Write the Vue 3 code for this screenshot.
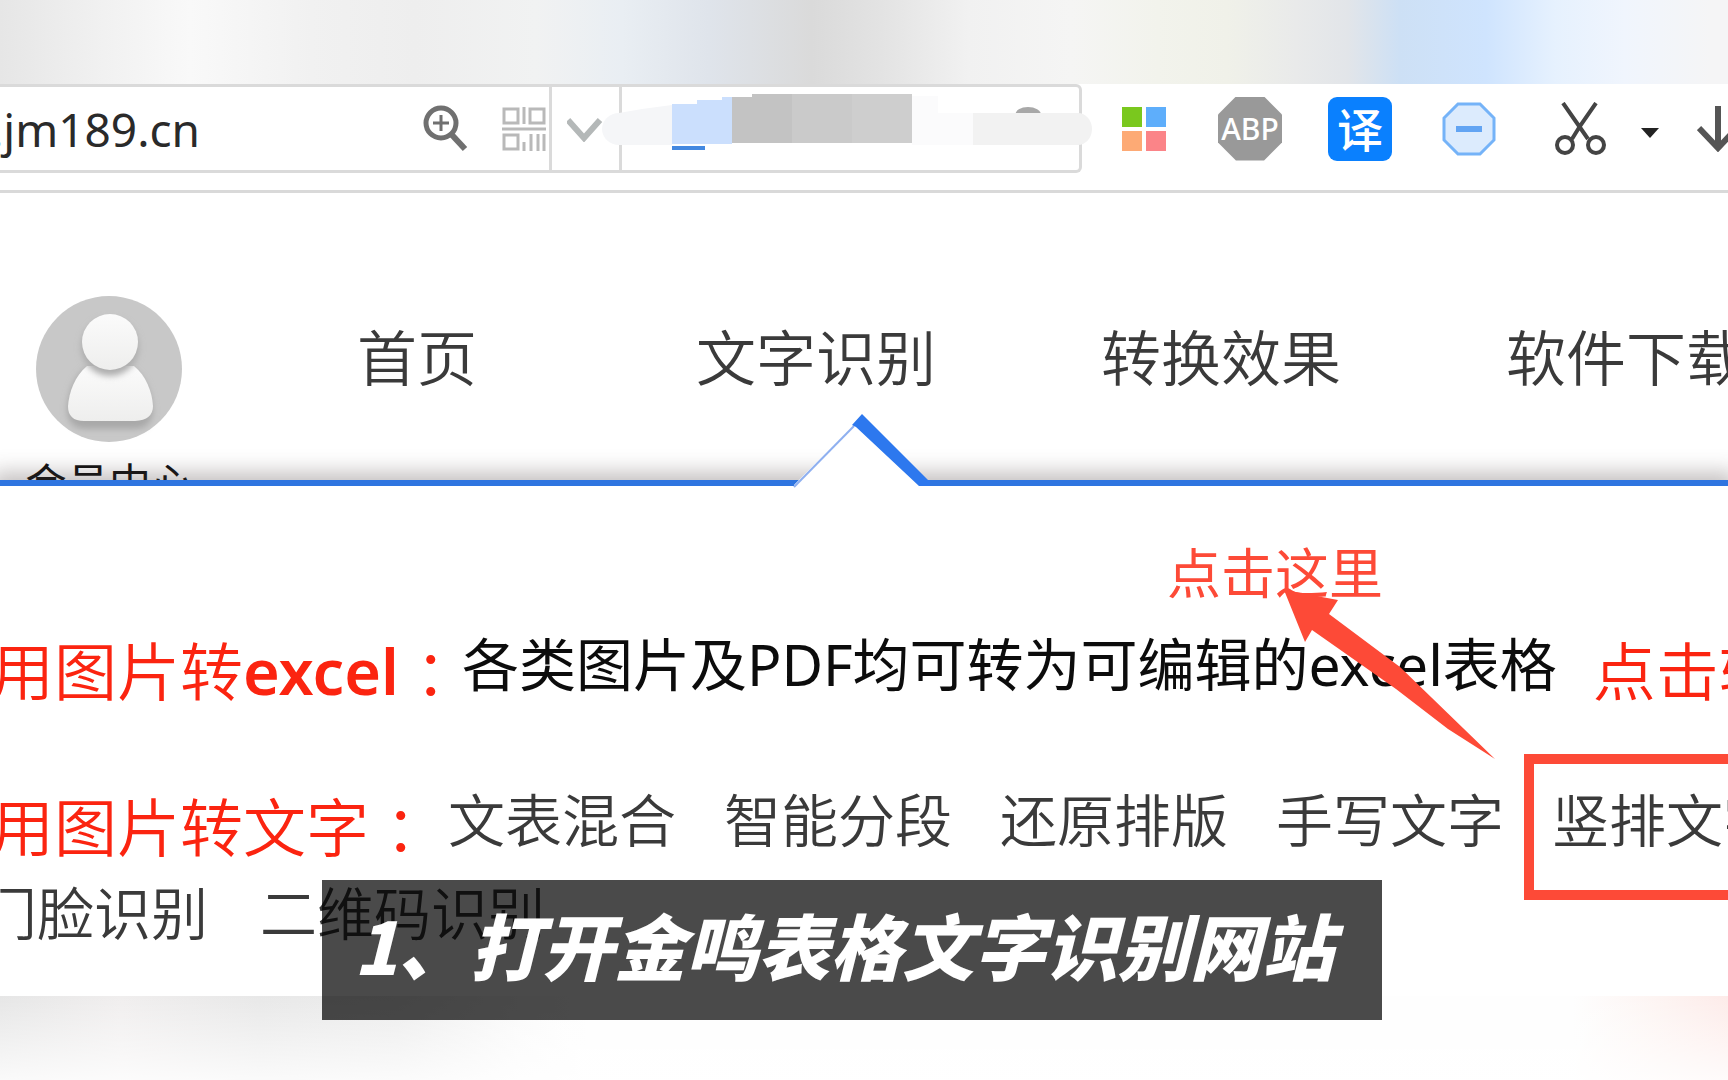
<script setup>
import { ref } from 'vue'

const address = ref('.jm189.cn')
const navItems = ['首页', '文字识别', '转换效果', '软件下载']
const textTools = ['文表混合', '智能分段', '还原排版', '手写文字', '竖排文字']
const moreTools = ['门脸识别', '二维码识别']
</script>

<template>
  <div class="stage">
    <div class="backdrop-top"></div>

    <header class="browser">
      <div class="address">
        <input v-model="address" class="url" type="text" aria-label="网址" />
        <button class="tool" type="button" aria-label="放大">
          <svg width="48" height="48" viewBox="0 0 48 48" fill="none" stroke="#707070">
            <circle cx="19" cy="18" r="15" stroke-width="5" />
            <path d="M30 30L43 44" stroke-width="6" />
            <path d="M19 10V26M11 18H27" stroke-width="3" />
          </svg>
        </button>
        <button class="tool" type="button" aria-label="二维码">
          <svg width="44" height="44" viewBox="0 0 44 44" fill="none" stroke="#b9b9b9" stroke-width="3">
            <path d="M2 2H16V16H2ZM28 2H42V16H28ZM2 28H16V42H2ZM22 0V17M0 22H44M22 35V44M29 27V44M36 27V44M42 27V44" />
          </svg>
        </button>
      </div>
      <button class="chevron" type="button" aria-label="展开">
        <svg width="38" height="26" viewBox="0 0 38 26" fill="none" stroke="#b4b8b8" stroke-width="6">
          <path d="M1 4L17 22L33 4" />
        </svg>
      </button>
      <div class="search">
        <svg class="mosaic" width="500" height="84" viewBox="600 87 500 84">
          <ellipse cx="1028" cy="115" rx="13" ry="8" fill="#a8a8a8" />
          <path d="M619 113L642 109L672 105V145H619A17 16 0 0 1 619 113Z" fill="#f5f6f8" />
          <path d="M672 104H697V100H722V97H732V144H672Z" fill="#cbdffd" />
          <path d="M732 97H752V94H792V143H732Z" fill="#c3c3c3" />
          <path d="M792 94H852V143H792Z" fill="#cacaca" />
          <path d="M852 94H912V143H852Z" fill="#cecece" />
          <path d="M912 96H938V113H973V145H912Z" fill="#fbfbfc" />
          <path d="M973 113H1078A14 16 0 0 1 1078 145H973Z" fill="#f2f2f2" />
          <path d="M672 148H705" stroke="#4388e0" stroke-width="4" />
        </svg>
      </div>
      <div class="extensions">
        <button class="ext apps" type="button" aria-label="应用">
          <svg width="44" height="44" viewBox="0 0 44 44">
            <path fill="#7ac81e" d="M0 0H20V20H0Z" /><path fill="#5eaefb" d="M24 0H44V20H24Z" />
            <path fill="#fdaa75" d="M0 24H20V44H0Z" /><path fill="#fb8488" d="M24 24H44V44H24Z" />
          </svg>
        </button>
        <button class="ext abp" type="button">ABP</button>
        <button class="ext translate" type="button">译</button>
        <button class="ext block" type="button" aria-label="拦截">
          <svg width="54" height="54" viewBox="0 0 54 54">
            <path d="M16 2H38L52 16V38L38 52H16L2 38V16Z" fill="#dcebfd" stroke="#75b3f8" stroke-width="3" />
            <path d="M14 27H40" stroke="#62a4f3" stroke-width="6" />
          </svg>
        </button>
        <button class="ext cut" type="button" aria-label="截图">
          <svg width="52" height="54" viewBox="0 0 52 54" fill="none" stroke="#444" stroke-width="4">
            <path d="M8 1L24 24L33 37M41 1L25 24L17 37" />
            <circle cx="10" cy="43" r="8" /><circle cx="41" cy="43" r="8" />
          </svg>
        </button>
        <button class="ext more" type="button" aria-label="更多">
          <svg width="18" height="10" viewBox="0 0 18 10"><path d="M0 0H18L9 10Z" fill="#222" /></svg>
        </button>
        <button class="ext download" type="button" aria-label="下载">
          <svg width="42" height="46" viewBox="0 0 42 46" fill="none" stroke="#555" stroke-width="6">
            <path d="M21 0V42M2 22L21 42L40 22" />
          </svg>
        </button>
      </div>
    </header>

    <div class="site-head">
      <a class="member" href="#">
        <svg width="146" height="146" viewBox="0 0 146 146">
          <defs>
            <linearGradient id="skin" x1="0" y1="0" x2="0" y2="1">
              <stop offset="0" stop-color="#fbfbfb" /><stop offset="1" stop-color="#eeeeed" />
            </linearGradient>
            <filter id="soft" x="-20%" y="-20%" width="140%" height="140%"><feGaussianBlur stdDeviation="3" /></filter>
          </defs>
          <circle cx="73" cy="73" r="73" fill="#c8c8c8" />
          <path filter="url(#soft)" fill="#a9a9a9" d="M50 72C37 82 31 100 31 116Q33 133 50 133H98Q115 133 117 116C116 98 110 82 96 72Z" />
          <path fill="url(#skin)" d="M51 70C39 80 33 96 32 110Q32 125 48 125H99Q117 124 117 110C116 95 110 80 98 70Z" />
          <circle cx="74" cy="51" r="29" fill="#adadad" filter="url(#soft)" />
          <circle cx="74" cy="46" r="28" fill="url(#skin)" />
        </svg>
        <span>会员中心</span>
      </a>
      <nav class="nav">
        <a v-for="item in navItems" :key="item" href="#">{{ item }}</a>
      </nav>
    </div>

    <main class="panel">
      <svg class="pointer" width="138" height="76" viewBox="0 0 138 76">
        <path d="M2 76V72L61 12L70 1L134 67V76Z" fill="#fff" />
        <path d="M2 74L62 13" stroke="#8fb0f0" stroke-width="2" />
        <path d="M60 12L70 1L136 67H138V73H127L64 14Z" fill="#2d78ee" />
      </svg>

      <section class="row intro">
        <h2 class="label">用图片转<strong>excel</strong><span class="colon">：</span></h2>
        <p class="desc">各类图片及PDF均可转为可编辑的excel表格</p>
        <a class="go" href="#">点击转换</a>
      </section>
      <section class="row tools">
        <h2 class="label">用图片转文字<span class="colon">：</span></h2>
        <div class="links">
          <a v-for="tool in textTools" :key="tool" href="#" :class="{ marked: tool === '竖排文字' }">{{ tool }}</a>
        </div>
      </section>
      <section class="links extra">
        <a v-for="tool in moreTools" :key="tool" href="#">{{ tool }}</a>
      </section>

      <div class="hint">点击这里</div>
      <svg class="arrow" width="212" height="170" viewBox="1284 590 212 170">
        <path d="M1284 590L1338 600L1329 614L1400 667L1495 759L1448 729L1396 689L1312 630L1305 642Z" fill="#fd4a37" />
      </svg>
    </main>

    <div class="backdrop-bottom"></div>
    <div class="caption">1、打开金鸣表格文字识别网站</div>
  </div>
</template>

<style>
body {
  margin: 0;
}
</style>

<style scoped>
.stage {
  position: relative;
  display: flex;
  flex-direction: column;
  min-height: 100vh;
  overflow: hidden;
  background: #fff;
  color: #3a3a3a;
  font-family: "Noto Sans", "Noto Sans CJK SC", sans-serif;
}

.backdrop-top {
  height: 84px;
  background: linear-gradient(90deg, #e6e6e6 0%, #f1f1f1 6%, #f9f9f9 11%, #f1f1f1 18%, #eeeeee 24%, #f1f2f2 31%, #e9eef3 36%, #dfe4eb 41%, #dadada 47%, #e3e3e3 51%, #f1f1f1 56%, #f5f5f4 62%, #f2f3ec 67%, #f0f1e9 71%, #e9eaea 75%, #e2e5e9 78%, #cde0f5 81%, #cfe4fe 86%, #e6f1fe 90%, #f0f5fd 94%, #f5f5f6 99%);
}

.browser {
  display: flex;
  align-items: flex-start;
  height: 106px;
  border-bottom: 3px solid #d9d9d9;
}

button {
  display: flex;
  align-items: center;
  justify-content: center;
  padding: 0;
  border: 0;
  background: none;
  font-family: inherit;
}

.address,
.chevron,
.search {
  box-sizing: border-box;
  height: 89px;
  border: 3px solid #dadada;
  border-left: 0;
}

.address {
  display: flex;
  flex: 1;
  align-items: center;
  gap: 32px;
  min-width: 0;
  padding-right: 3px;
}

.url {
  flex: 1;
  min-width: 0;
  margin: 0 0 0 -9px;
  padding: 0;
  border: 0;
  outline: 0;
  background: none;
  color: #2a2a2a;
  font: 46px/64px "Noto Sans", sans-serif;
}

.chevron {
  width: 70px;
}

.search {
  position: relative;
  width: 460px;
  border-radius: 0 6px 6px 0;
}

.mosaic {
  position: absolute;
  top: 0;
  left: -22px;
}

.extensions {
  display: flex;
  align-items: center;
  width: 646px;
  height: 89px;
}

.ext {
  flex: none;
}

.apps {
  margin: 0 52px 0 40px;
}

.abp {
  width: 64px;
  height: 64px;
  margin-right: 46px;
  clip-path: polygon(28% 0, 72% 0, 100% 28%, 100% 72%, 72% 100%, 28% 100%, 0 72%, 0 28%);
  background: #999;
  color: #fff;
  font-size: 30px;
  font-weight: 500;
}

.translate {
  width: 64px;
  height: 64px;
  margin-right: 50px;
  border-radius: 9px;
  background: #0a80fe;
  color: #fff;
  font-size: 46px;
  line-height: 64px;
  font-weight: 500;
}

.cut {
  margin-left: 59px;
}

.more {
  margin: 8px 38px 0 34px;
}

.site-head {
  display: flex;
  box-sizing: border-box;
  height: 287px;
  padding-left: 25px;
  overflow: hidden;
}

a {
  color: inherit;
  text-decoration: none;
}

.member {
  display: flex;
  flex: none;
  flex-direction: column;
  align-items: center;
  gap: 20px;
  width: 168px;
  margin: 103px 164px 0 0;
  color: #111;
  font-size: 42px;
  font-weight: 400;
  line-height: 42px;
  white-space: nowrap;
}

.member svg {
  flex: none;
}

.nav {
  display: flex;
  gap: 165px;
  padding-top: 135px;
  font-size: 60px;
  font-weight: 350;
  line-height: 60px;
  white-space: nowrap;
}

.nav a:first-child {
  margin-right: 54px;
}

.panel {
  position: relative;
  box-sizing: border-box;
  height: 516px;
  padding-top: 150px;
  border-top: 6px solid #2f75e0;
  background: #fff;
  box-shadow: 0 0 20px 8px rgba(70, 60, 60, 0.32);
  font-weight: 350;
  white-space: nowrap;
  clip-path: inset(-80px 0 0 0);
}

.pointer {
  position: absolute;
  top: -73px;
  left: 792px;
}

.row {
  display: flex;
  align-items: flex-start;
  margin-left: -9px;
}

.label,
.go {
  margin: 0;
  color: #fb2410;
  font-size: 63px;
  font-weight: 350;
  line-height: 70px;
}

.label strong {
  font-weight: 600;
}

.colon {
  padding-left: 16px;
  margin-right: -16px;
}

.desc {
  margin: 0;
  color: #0c0c0c;
  font-size: 57px;
  font-weight: 400;
  line-height: 56px;
}

.go {
  margin-left: 36px;
}

.tools {
  gap: 16px;
  margin-top: 86px;
}

.links {
  display: flex;
  gap: 48px;
  font-size: 57px;
  line-height: 56px;
}

.marked {
  position: relative;
}

.marked::before {
  position: absolute;
  top: -38px;
  right: -40px;
  bottom: -52px;
  left: -28px;
  border: 10px solid #fd4a37;
  content: "";
}

.extra {
  margin: 23px 0 0 -20px;
  gap: 52px;
}

.hint {
  position: absolute;
  top: 60px;
  left: 1167px;
  color: #fd4a37;
  font-size: 54px;
  font-weight: 400;
  line-height: 54px;
}

.arrow {
  position: absolute;
  top: 104px;
  left: 1284px;
}

.backdrop-bottom {
  position: relative;
  flex: 1;
  min-height: 84px;
  background:
    linear-gradient(180deg, rgba(255, 255, 255, 0) 0%, rgba(255, 255, 255, 0.8) 100%),
    linear-gradient(90deg, #e6e6e6 0%, #f0eeee 7%, #e8e8e8 15%, #ececec 23%, #fafafa 30%, #fefefe 34%, #fefefe 91%, #fdf4f2 96%, #fdebe9 100%);
}

.caption {
  position: absolute;
  top: 880px;
  left: 322px;
  box-sizing: border-box;
  width: 1060px;
  padding: 28px 0 40px 32px;
  background: rgba(0, 0, 0, 0.71);
  color: #fff;
  font-family: "Noto Sans CJK SC", sans-serif;
  font-size: 72px;
  font-style: italic;
  font-weight: 900;
  line-height: 72px;
  white-space: nowrap;
}
</style>
